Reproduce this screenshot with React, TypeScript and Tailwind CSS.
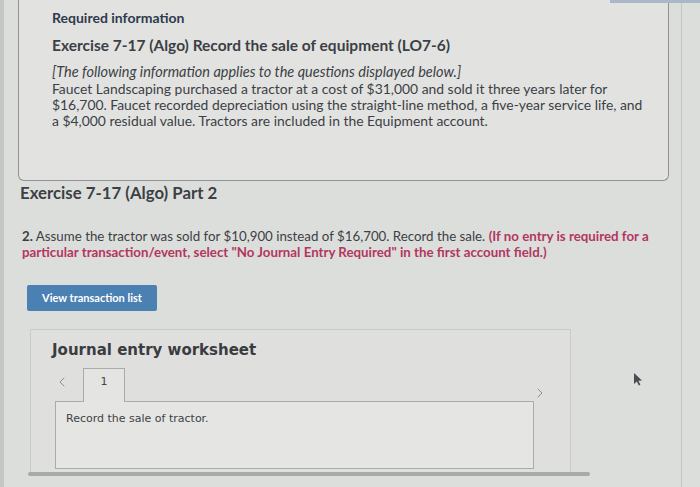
import { ChevronLeft, ChevronRight } from 'lucide-react';

const bodyFont = { fontFamily: 'Lato, "Open Sans", sans-serif' };
const verdana = { fontFamily: '"DejaVu Sans", Verdana, sans-serif' };

function InfoBox() {
  return (
    <section className="ml-[18px] h-[181px] w-[651px] rounded-b-[6px] border-x border-b border-[#8f9397] bg-[#e2e3e1] pl-[33px] pt-[8px] text-[#3c3f45]">
      <h2 className="text-[14px] font-bold leading-[20px] text-[#2f3a4c]">Required information</h2>
      <h1 className="mt-[7px] text-[15.5px] font-bold leading-[20px]">Exercise 7-17 (Algo) Record the sale of equipment (LO7-6)</h1>
      <p className="mt-[7px] text-[14.5px] italic leading-[20px]">[The following information applies to the questions displayed below.]</p>
      <p className="-mt-px text-[13.9px] leading-[16px]">
        Faucet Landscaping purchased a tractor at a cost of $31,000 and sold it three years later for
        <br />
        $16,700. Faucet recorded depreciation using the straight-line method, a five-year service life, and
        <br />a $4,000 residual value. Tractors are included in the Equipment account.
      </p>
    </section>
  );
}

function Worksheet() {
  return (
    <section className="ml-[30px] mt-[18px] w-[541px] border border-b-0 border-[#c9cbc8] bg-[#dfe0de] pb-[6px]">
      <h3 className="ml-[21px] mt-[10px] text-[15px] font-bold leading-[20px] text-[#3a3c40]" style={verdana}>
        Journal entry worksheet
      </h3>

      <div className="mt-[8px] flex items-start">
        <ChevronLeft className="ml-[23px] mt-[6px] h-[16px] w-[16px] text-[#8a8c90]" strokeWidth={1.5} />
        <div
          className="relative z-10 ml-[13px] flex h-[34px] w-[42px] items-start justify-center border border-b-0 border-[#a9abae] bg-[#e4e5e3] pt-[5px] text-[11px] text-[#444]"
          style={verdana}
        >
          1
        </div>
        <ChevronRight className="ml-auto mr-[22px] mt-[17px] h-[16px] w-[16px] text-[#8a8c90]" strokeWidth={1.5} />
      </div>

      <div
        className="-mt-px ml-[24px] h-[68px] w-[479px] border border-[#a9abae] bg-[#e5e6e4] pl-[10px] pt-[9px] text-[11px] text-[#3f4145]"
        style={verdana}
      >
        Record the sale of tractor.
      </div>
    </section>
  );
}

export default function App() {
  return (
    <div className="relative h-[487px] w-[700px] overflow-hidden bg-[#dcdedb]" style={bodyFont}>
      <div className="absolute left-0 top-0 h-full w-[4px] bg-[#c5c7c4]" />
      <div className="absolute left-[681px] top-0 h-full w-px bg-[#c3c5c2]" />
      <div className="absolute right-0 top-0 h-[3px] w-[90px] bg-[#a9b8c8]" />

      <InfoBox />

      <h2 className="ml-[20px] mt-[2px] text-[16.8px] font-bold leading-[20px] text-[#3c3f45]">Exercise 7-17 (Algo) Part 2</h2>

      <p className="ml-[22px] mt-[25px] text-[13.3px] leading-[16px] text-[#3c3f45]">
        <span className="font-bold">2.</span> Assume the tractor was sold for $10,900 instead of $16,700. Record the sale.{' '}
        <span className="font-bold text-[#b3365f]">
          (If no entry is required for a
          <br />
          particular transaction/event, select "No Journal Entry Required" in the first account field.)
        </span>
      </p>

      <button
        type="button"
        className="ml-[27px] mt-[25px] flex h-[26px] w-[130px] items-center justify-center rounded-[2px] bg-[#4b80b2] text-[11px] font-bold text-white"
      >
        View transaction list
      </button>

      <Worksheet />

      <div className="ml-[28px] mt-[-3px] h-[4px] w-[562px] rounded-full bg-[#a8aaa8]" />

      <svg className="absolute left-[633px] top-[372px]" width="10" height="14" viewBox="0 0 10 14">
        <path d="M1 1 L1 12 L3.8 9.4 L5.8 13.5 L7.4 12.8 L5.4 8.8 L9 8.6 Z" fill="#4a4c50" />
      </svg>
    </div>
  );
}
